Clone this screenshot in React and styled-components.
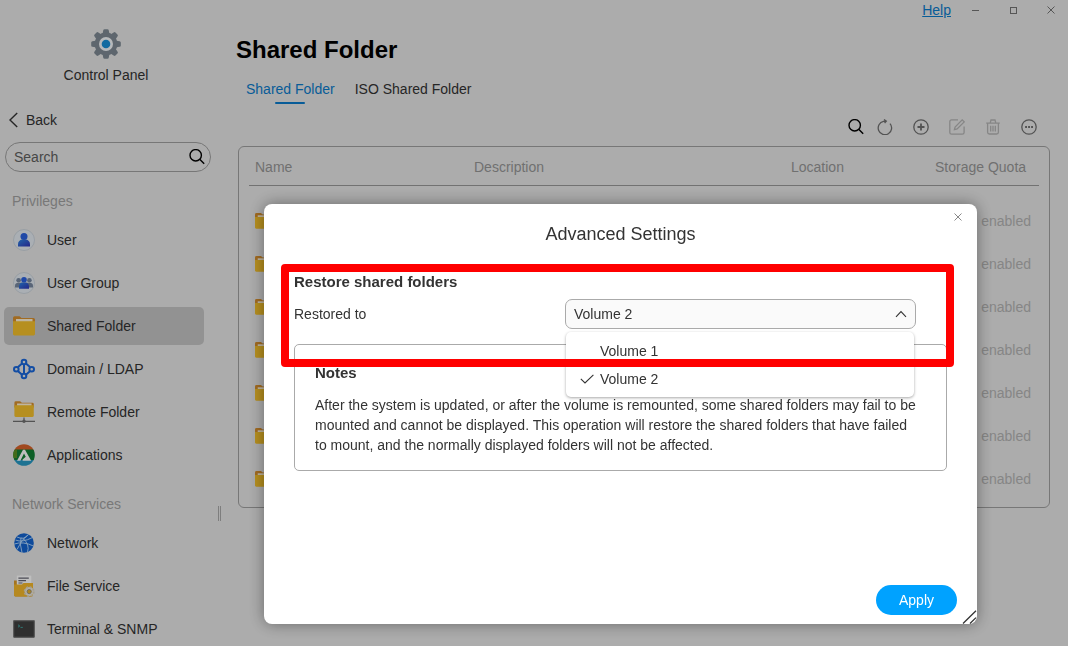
import React, { useState } from 'react';
import styled, { createGlobalStyle } from 'styled-components';

const privileges = [
	{ label: 'User', icon: 'user' },
	{ label: 'User Group', icon: 'group' },
	{ label: 'Shared Folder', icon: 'folder' },
	{ label: 'Domain / LDAP', icon: 'domain' },
	{ label: 'Remote Folder', icon: 'remote' },
	{ label: 'Applications', icon: 'apps' },
];

const services = [
	{ label: 'Network', icon: 'network' },
	{ label: 'File Service', icon: 'file' },
	{ label: 'Terminal & SNMP', icon: 'terminal' },
];

const volumes = ['Volume 1', 'Volume 2'];
const folders = [1, 2, 3, 4, 5, 6, 7];
const teeth = [0, 45, 90, 135, 180, 225, 270, 315];

const GearIcon = () => (
	<svg width="30" height="30" viewBox="0 0 30 30" aria-hidden="true">
		{teeth.map((angle) => (
			<path key={angle} d="M11.4 6 L12.2 1.4 Q12.4 0.2 13.6 0.2 H16.4 Q17.6 0.2 17.8 1.4 L18.6 6 Z" fill="#7e8a94" transform={`rotate(${angle} 15 15)`} />
		))}
		<circle cx="15" cy="15" r="11.4" fill="#7e8a94" />
		<circle cx="15" cy="15" r="7" fill="#f4f8fb" />
		<circle cx="15" cy="15" r="4.3" fill="#1a90d8" />
	</svg>
);

const FolderShape = () => (
	<>
		<path d="M0 3 Q0 1.2 1.6 1.2 H6.5 L8.5 3 H20.4 Q22 3 22 4.6 V9 H0 Z" fill="#d8902e" />
		<rect x="3" y="4" width="16.5" height="3" fill="#fff3d8" />
		<path d="M0 6.2 H22 V19 Q22 20.4 20.6 20.4 H1.4 Q0 20.4 0 19 Z" fill="#f4c02b" />
	</>
);

const icons = {
	user: (
		<>
			<circle cx="11" cy="11" r="10.5" fill="#e4ebf2" stroke="#cdd5dc" />
			<path d="M5 17.6 V15.6 Q5 11.4 9.2 10.6 H12.8 Q17 11.4 17 15.6 V17.6 Z" fill="url(#userBlue)" />
			<circle cx="11" cy="7.6" r="3.5" fill="#2c62e0" />
		</>
	),
	group: (
		<>
			<circle cx="11" cy="11" r="10.5" fill="#e4ebf2" stroke="#cdd5dc" />
			<circle cx="5.6" cy="8.3" r="2.3" fill="#7888a0" />
			<circle cx="16.4" cy="8.3" r="2.3" fill="#7888a0" />
			<path d="M2 15.4 V13.5 Q2.2 10.8 5.3 10.8 H16.7 Q19.8 10.8 20 13.5 V15.4 Z" fill="#7888a0" />
			<circle cx="11" cy="7.7" r="2.8" fill="#2c62e0" />
			<path d="M6 16.8 V14.2 Q6.2 10.6 9.8 10.4 H12.2 Q15.8 10.6 16 14.2 V16.8 Z" fill="url(#userBlue)" />
		</>
	),
	folder: <FolderShape />,
	domain: (
		<g fill="none" stroke="#1a68dc" strokeWidth="2">
			<path d="M9 5.6 L4.8 9.2 M13 5.6 L17.2 9.2 M11 6.4 V16 M4.8 13 L8.8 16.6 M17.2 13 L13.2 16.6" />
			<circle cx="11" cy="4" r="2.3" />
			<circle cx="3.3" cy="11.2" r="2.3" />
			<circle cx="18.7" cy="11.2" r="2.3" />
			<circle cx="11" cy="18" r="2.3" />
		</g>
	),
	remote: (
		<>
			<g transform="translate(1.4 -0.8) scale(0.88 0.82)">
				<FolderShape />
			</g>
			<path d="M0 20.3 H22 M11 16.5 V19" stroke="#707070" strokeWidth="1.2" />
			<circle cx="11" cy="20.2" r="1.7" fill="#707070" />
		</>
	),
	apps: (
		<>
			<clipPath id="appsClip">
				<circle cx="11" cy="11" r="10.8" />
			</clipPath>
			<g clipPath="url(#appsClip)">
				<rect width="22" height="7" fill="#d8622a" />
				<rect y="5.5" width="22" height="11" fill="#128035" />
				<rect y="6" width="4" height="8" fill="#5b9022" />
				<rect y="16" width="22" height="6" fill="#2799c4" />
			</g>
			<path d="M4 16.8 L10 5.8 H12 L18.2 16.8 H14.8 L11 9.6 L7.4 16.8 Z M9.6 15.4 L12.8 12.8 L14.9 16.8 H9.6 Z" fill="#fff" />
		</>
	),
	network: (
		<>
			<circle cx="11" cy="11" r="9.8" fill="#1464d0" />
			<g fill="none" stroke="#b9dcff" strokeWidth="0.9">
				<path d="M2.5 8 Q9 11 19.5 5.5 M4 5 Q11 8.5 15.5 2.6 M1.3 12 Q10 9 20.5 14 M4 17.5 Q8 8 15 2.5 M9 20.5 Q6.5 13 8 5.5 M14.5 20 Q17 13 10 6.2" />
			</g>
		</>
	),
	file: (
		<>
			<path d="M1 5.5 H6 V8 H20 V20 Q20 21.4 18.6 21.4 H2.4 Q1 21.4 1 20 Z" fill="#dd9c2a" />
			<rect x="3.8" y="0.6" width="14.5" height="11" fill="#fff" />
			<path d="M5.4 3.2 H15.8 M5.4 5.6 H13 M5.4 8 H9.5" stroke="#666672" strokeWidth="1.2" />
			<path d="M1 9.4 H9 L10.5 8 H20 V20 Q20 21.4 18.6 21.4 H2.4 Q1 21.4 1 20 Z" fill="#f4b82b" />
			<circle cx="16.2" cy="16.6" r="4.6" fill="#eee9dc" stroke="#dcd4c0" strokeWidth="1.8" strokeDasharray="2 1.6" />
			<circle cx="16.2" cy="16.6" r="2.1" fill="#e8b42d" stroke="#8e8878" strokeWidth="0.8" />
		</>
	),
	terminal: (
		<>
			<rect x="0.6" y="2.6" width="20.8" height="16.8" rx="0.8" fill="#404040" stroke="#7a7a7a" strokeWidth="1.2" />
			<path d="M5 6.8 L6.8 8 L5 9.2 M7.5 9.4 H9.8" fill="none" stroke="#3daaa5" strokeWidth="0.9" />
		</>
	),
};

const NavIcon = ({ name }) => (
	<svg width="22" height="22" viewBox="0 0 22 22" aria-hidden="true">
		<defs>
			<linearGradient id="userBlue" x1="0" y1="0" x2="1" y2="1">
				<stop offset="0" stopColor="#2d86e4" />
				<stop offset="1" stopColor="#3033b8" />
			</linearGradient>
		</defs>
		{icons[name]}
	</svg>
);

const SearchIcon = () => (
	<svg width="16" height="16" viewBox="0 0 16 16" fill="none" stroke="#000" strokeWidth="1.4" aria-hidden="true">
		<circle cx="6.7" cy="6.3" r="5.7" />
		<path d="M10.7 10.3 L15.2 14.8" />
	</svg>
);

const CloseIcon = () => (
	<svg width="8" height="8" viewBox="0 0 8 8" fill="none" stroke="currentColor" aria-hidden="true">
		<path d="M0.5 0.5 L7.5 7.5 M7.5 0.5 L0.5 7.5" />
	</svg>
);

const tools = [
	{
		label: 'Refresh',
		icon: <path d="M13 4.6 A6.7 6.7 0 1 1 6.5 2.4 L9 2.2 M7 0.5 L9.3 2.2 L7.6 4" />,
	},
	{
		label: 'Create',
		icon: (
			<>
				<circle cx="8" cy="8" r="7.2" />
				<path d="M8 4.5 V11.5 M4.5 8 H11.5" strokeWidth="1.8" />
			</>
		),
	},
	{
		label: 'Edit',
		disabled: true,
		icon: <path d="M9 0.9 H2.6 Q0.8 0.9 0.8 2.7 V13.4 Q0.8 15.2 2.6 15.2 H13.3 Q15.1 15.2 15.1 13.4 V7.4 M5.4 10.7 L6.1 8 L13.2 0.9 L15.2 2.9 L8.1 10 Z" />,
	},
	{
		label: 'Delete',
		disabled: true,
		icon: (
			<>
				<path d="M1.2 4.1 H14.8 M5.2 4 L6 1 H10 L10.8 4 M2.6 4 V13.2 Q2.6 15 4.4 15 H11.6 Q13.4 15 13.4 13.2 V4" />
				<path d="M5.7 6.7 V12.4 M8 6.7 V12.4 M10.3 6.7 V12.4" />
			</>
		),
	},
	{
		label: 'More',
		icon: (
			<>
				<circle cx="8" cy="8" r="7.2" />
				<path d="M4.1 8 H6 M7.1 8 H9 M10.1 8 H12" strokeWidth="1.8" />
			</>
		),
	},
];

const NavList = ({ items, active }) => (
	<List>
		{items.map((item) => (
			<li key={item.label}>
				<NavLink href="#" $active={item.label === active}>
					<NavIcon name={item.icon} />
					{item.label}
				</NavLink>
			</li>
		))}
	</List>
);

const Sidebar = () => (
	<SidebarWrapper>
		<AppBadge>
			<GearIcon />
			<span>Control Panel</span>
		</AppBadge>
		<BackButton type="button">
			<svg width="9" height="16" viewBox="0 0 9 16" fill="none" stroke="#333" strokeWidth="1.4" aria-hidden="true">
				<path d="M8.2 1 L1 8 L8.2 15" />
			</svg>
			Back
		</BackButton>
		<SearchBox>
			<input type="text" placeholder="Search" aria-label="Search" />
			<SearchIcon />
		</SearchBox>
		<GroupTitle>Privileges</GroupTitle>
		<NavList items={privileges} active="Shared Folder" />
		<GroupTitle>Network Services</GroupTitle>
		<NavList items={services} />
	</SidebarWrapper>
);

const FolderTable = () => (
	<Panel>
		<Table>
			<colgroup>
				<col width="219" />
				<col />
				<col width="144" />
				<col width="110" />
			</colgroup>
			<thead>
				<tr>
					<th scope="col">Name</th>
					<th scope="col">Description</th>
					<th scope="col">Location</th>
					<th scope="col">Storage Quota</th>
				</tr>
			</thead>
			<tbody>
				{folders.map((id) => (
					<tr key={id}>
						<td>
							<svg width="20" height="18" viewBox="0 0 22 22" preserveAspectRatio="none" aria-hidden="true">
								<FolderShape />
							</svg>
						</td>
						<td />
						<td />
						<QuotaCell>enabled</QuotaCell>
					</tr>
				))}
			</tbody>
		</Table>
	</Panel>
);

const AdvancedSettings = () => {
	const [volume, setVolume] = useState('Volume 2');

	return (
		<Overlay>
			<Modal role="dialog" aria-labelledby="dialog-title">
				<ModalClose type="button" aria-label="Close">
					<CloseIcon />
				</ModalClose>
				<ModalTitle id="dialog-title">Advanced Settings</ModalTitle>
				<ModalBody>
					<SectionTitle>Restore shared folders</SectionTitle>
					<Field>
						<label htmlFor="volume">Restored to</label>
						<SelectWrapper>
							<Select id="volume" value={volume} onChange={(e) => setVolume(e.target.value)}>
								{volumes.map((name) => (
									<option key={name}>{name}</option>
								))}
							</Select>
							<Chevron width="12" height="8" viewBox="0 0 12 8" aria-hidden="true">
								<path d="M1 6.8 L6 1.5 L11 6.8" />
							</Chevron>
							<Menu role="listbox" aria-label="Restored to">
								{volumes.map((name) => (
									<MenuItem key={name} role="option" aria-selected={name === volume} onClick={() => setVolume(name)}>
										{name === volume && (
											<svg width="14" height="10" viewBox="0 0 14 10" fill="none" stroke="#333" strokeWidth="1.1" aria-hidden="true">
												<path d="M0.8 4.8 L5 9 L13.4 0.8" />
											</svg>
										)}
										<span>{name}</span>
									</MenuItem>
								))}
							</Menu>
						</SelectWrapper>
					</Field>
					<Notes>
						<SectionTitle>Notes</SectionTitle>
						<p>
							After the system is updated, or after the volume is remounted, some shared folders may fail to be mounted and cannot be displayed. This
							operation will restore the shared folders that have failed to mount, and the normally displayed folders will not be affected.
						</p>
					</Notes>
					<Highlight />
				</ModalBody>
				<ApplyButton type="button">Apply</ApplyButton>
				<ResizeGrip width="15" height="14" viewBox="0 0 15 14" aria-hidden="true">
					<path d="M1 13.5 L14 0.8 M8 13.5 L14 7.6" />
				</ResizeGrip>
			</Modal>
		</Overlay>
	);
};

const App = () => (
	<>
		<GlobalStyle />
		<Window>
			<Sidebar />
			<Splitter />
			<Main>
				<TitleBar>
					<HelpLink href="#">Help</HelpLink>
					<WindowButton type="button" aria-label="Minimize">
						<svg width="8" height="8" viewBox="0 0 8 8" stroke="currentColor" aria-hidden="true">
							<path d="M1 4.5 H8" />
						</svg>
					</WindowButton>
					<WindowButton type="button" aria-label="Maximize">
						<svg width="8" height="8" viewBox="0 0 8 8" fill="none" stroke="currentColor" aria-hidden="true">
							<rect x="1.5" y="1.5" width="6" height="6" />
						</svg>
					</WindowButton>
					<WindowButton type="button" aria-label="Close window">
						<CloseIcon />
					</WindowButton>
				</TitleBar>
				<Content>
					<PageTitle>Shared Folder</PageTitle>
					<Tabs>
						<Tab type="button" $active>
							Shared Folder
						</Tab>
						<Tab type="button">ISO Shared Folder</Tab>
					</Tabs>
					<Toolbar>
						<ToolButton type="button" aria-label="Search folders" $narrow>
							<SearchIcon />
						</ToolButton>
						{tools.map((tool) => (
							<ToolButton key={tool.label} type="button" aria-label={tool.label} disabled={tool.disabled}>
								<svg width="16" height="16" viewBox="0 0 16 16" fill="none" stroke="currentColor" strokeWidth="1.3" aria-hidden="true">
									{tool.icon}
								</svg>
							</ToolButton>
						))}
					</Toolbar>
					<FolderTable />
				</Content>
			</Main>
		</Window>
		<AdvancedSettings />
	</>
);

const GlobalStyle = createGlobalStyle`
	* {
		box-sizing: border-box;
	}
	body {
		margin: 0;
		background-color: #e7e7e7;
		color: #333;
		font: 14px/20px 'Liberation Sans', Arial, sans-serif;
	}
	button, input, select {
		margin: 0;
		padding: 0;
		border: none;
		background: none;
		color: inherit;
		font: inherit;
	}
	h1, h2, h3, p, ul {
		margin: 0;
		padding: 0;
	}
	svg {
		display: block;
		flex-shrink: 0;
	}
`;

const Window = styled.div`
	display: flex;
	height: 100vh;
	overflow: hidden;
`;

const SidebarWrapper = styled.aside`
	width: 212px;
	flex-shrink: 0;
	padding-top: 29px;
`;

const AppBadge = styled.div`
	display: flex;
	flex-direction: column;
	align-items: center;
	gap: 6px;
`;

const BackButton = styled.button`
	display: flex;
	align-items: center;
	gap: 8px;
	margin: 25px 0 12px 9px;
`;

const SearchBox = styled.div`
	display: flex;
	align-items: center;
	height: 30px;
	margin: 0 1px 0 5px;
	padding: 0 5px 0 8px;
	border: 1px solid #a0a0a0;
	border-radius: 15px;
	input {
		flex: 1;
		min-width: 0;
		outline: none;
	}
	input::placeholder {
		color: #606060;
	}
`;

const GroupTitle = styled.h2`
	padding: 19px 12px 10px;
	color: #a2a2a2;
	font-size: 14px;
	font-weight: 400;
`;

const List = styled.ul`
	display: flex;
	flex-direction: column;
	gap: 5px;
	margin: 0 8px 1px 4px;
	list-style: none;
`;

const NavLink = styled.a`
	display: flex;
	align-items: center;
	gap: 12px;
	height: 38px;
	padding-left: 9px;
	border-radius: 5px;
	background-color: ${(props) => (props.$active ? '#c5c5c5' : 'transparent')};
	color: inherit;
	text-decoration: none;
`;

const Splitter = styled.div`
	width: 3px;
	height: 15px;
	flex-shrink: 0;
	margin: 506px 1px 0 6px;
	border: 1px solid #aaa;
	border-width: 0 1px;
`;

const Main = styled.main`
	flex: 1;
	min-width: 0;
`;

const TitleBar = styled.div`
	display: flex;
	justify-content: flex-end;
	align-items: center;
	gap: 4px;
	height: 20px;
`;

const HelpLink = styled.a`
	margin-right: 3px;
	color: #0b7ccc;
`;

const WindowButton = styled.button`
	display: flex;
	justify-content: center;
	align-items: center;
	width: 34px;
	height: 20px;
	color: #747474;
`;

const Content = styled.div`
	padding: 14px 18px 0 16px;
`;

const PageTitle = styled.h1`
	margin-left: -2px;
	color: #000;
	font-size: 24px;
	line-height: 32px;
`;

const Tabs = styled.div`
	display: flex;
	gap: 20px;
	padding: 13px 8px 16px;
`;

const Tab = styled.button`
	position: relative;
	color: ${(props) => (props.$active ? '#0b7ccc' : '#333')};
	&::after {
		content: '';
		display: ${(props) => (props.$active ? 'block' : 'none')};
		position: absolute;
		top: 23px;
		left: calc(50% - 15px);
		width: 30px;
		height: 2px;
		border-radius: 1px;
		background-color: #0b7ccc;
	}
`;

const Toolbar = styled.div`
	display: flex;
	justify-content: flex-end;
	height: 31px;
	padding: 0 3px 7px 0;
`;

const ToolButton = styled.button`
	display: flex;
	justify-content: center;
	align-items: center;
	width: ${(props) => (props.$narrow ? '22px' : '36px')};
	color: #707070;
	&:disabled {
		color: #b4b4b4;
	}
`;

const Panel = styled.div`
	padding: 0 10px 7px;
	border: 1px solid #a0a0a0;
	border-radius: 6px;
`;

const Table = styled.table`
	width: 100%;
	table-layout: fixed;
	border-collapse: separate;
	border-spacing: 0;
	th {
		height: 39px;
		padding: 2px 6px 0;
		border-bottom: 1px solid #9a9a9a;
		color: #979797;
		font-weight: 400;
		text-align: left;
		white-space: nowrap;
	}
	td {
		height: 43px;
		padding: 0 6px;
	}
	tbody::before {
		content: '';
		display: block;
		height: 13px;
	}
	td:last-child {
		padding-right: 8px;
	}
`;

const QuotaCell = styled.td`
	color: #b4b4b4;
	text-align: right;
`;

const Overlay = styled.div`
	position: fixed;
	inset: 0;
	display: flex;
	align-items: stretch;
	padding: 204px 91px 22px 264px;
	background-color: rgba(0, 0, 0, 0.255);
`;

const Modal = styled.section`
	position: relative;
	display: flex;
	flex-direction: column;
	flex: 1;
	padding-top: 18px;
	border-radius: 8px;
	background-color: #fff;
	box-shadow: 0 0 16px rgba(0, 0, 0, 0.4);
`;

const ModalClose = styled.button`
	position: absolute;
	top: 3px;
	right: 9px;
	display: flex;
	justify-content: center;
	align-items: center;
	width: 20px;
	height: 20px;
	color: #888;
`;

const ModalTitle = styled.h2`
	font-size: 18px;
	font-weight: 400;
	line-height: 24px;
	text-align: center;
`;

const ModalBody = styled.div`
	position: relative;
	margin: 26px 30px 0;
`;

const SectionTitle = styled.h3`
	font-size: 15px;
	line-height: 20px;
`;

const Field = styled.div`
	display: grid;
	grid-template-columns: 271px 1fr;
	align-items: center;
	padding: 7px 31px 15px 0;
`;

const SelectWrapper = styled.div`
	position: relative;
`;

const Select = styled.select`
	display: block;
	appearance: none;
	width: 100%;
	height: 30px;
	padding: 0 8px;
	border: 1px solid #aaa;
	border-radius: 7px;
	background-color: #fafafa;
`;

const Chevron = styled.svg`
	position: absolute;
	top: 11px;
	right: 9px;
	fill: none;
	stroke: #333;
	stroke-width: 1.1;
	pointer-events: none;
`;

const Menu = styled.ul`
	position: absolute;
	top: 33px;
	left: 1px;
	right: 2px;
	padding: 5px 14px 4px;
	border-radius: 5px;
	background-color: #fff;
	box-shadow: 0 1px 3px rgba(0, 0, 0, 0.35);
	list-style: none;
`;

const MenuItem = styled.li`
	display: grid;
	grid-template-columns: 14px 1fr;
	align-items: center;
	gap: 6px;
	height: 28px;
	span {
		grid-column: 2;
	}
`;

const Notes = styled.div`
	padding: 18px 28px 15px 20px;
	border: 1px solid #aaa;
	border-radius: 5px;
	p {
		margin-top: 12px;
	}
`;

/* red frame drawn over the volume selector */
const Highlight = styled.div`
	position: absolute;
	top: -8px;
	left: -13px;
	right: -7px;
	height: 103px;
	border: 8px solid #f00;
	border-radius: 4px;
	pointer-events: none;
`;

const ApplyButton = styled.button`
	align-self: flex-end;
	width: 81px;
	height: 30px;
	margin: auto 20px 9px 0;
	border-radius: 15px;
	background-color: #00a2ff;
	color: #fff;
`;

const ResizeGrip = styled.svg`
	position: absolute;
	right: 0;
	bottom: 0;
	fill: none;
	stroke: #333;
	stroke-width: 1.3;
`;

export default App;
